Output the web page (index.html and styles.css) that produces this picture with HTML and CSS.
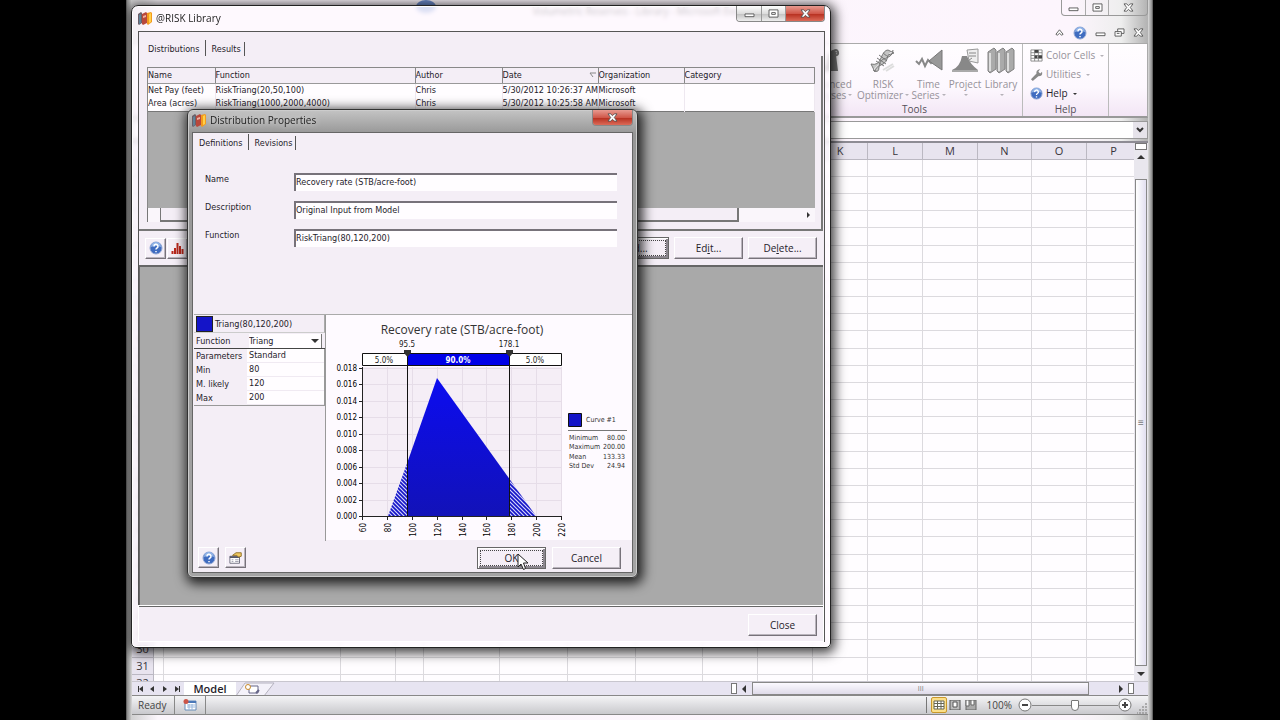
FILE: index.html
```html
<!DOCTYPE html>
<html lang="en">
<head>
<meta charset="utf-8">
<title>@RISK Library</title>
<link rel="stylesheet" href="styles.css">
</head>
<body>
<svg class="defs" aria-hidden="true">
  <defs>
    <symbol id="books" viewBox="0 0 14 14">
      <path d="M0 3l3-2 1 1v10l-3 2-1-1z" fill="#6b5f68"/><path d="M1 4l2-1v9l-2 1z" fill="#5f8298"/>
      <path d="M4 3l4-2 1 1v10l-4 2-1-1z" fill="#b8483c"/><path d="M5 5l3-1v2l-3 1z" fill="#f0b0a0"/>
      <path d="M9 2l4-1 1 1v9l-4 3-1-1z" fill="#f39a1c"/><path d="M11 3l2-1v9l-2 1z" fill="#ffd04a"/>
    </symbol>
    <symbol id="help" viewBox="0 0 14 14">
      <circle cx="7" cy="7" r="6" fill="#3f6cc0" stroke="#8fa6d4"/><path d="M2 6a5 5 0 0 1 10 0q-5-2-10 0z" fill="#8fb2e6"/>
      <path d="M5 5.500a2 2 0 1 1 3 1.500q-1 .5-1 1.500M7 10v1.200" fill="none" stroke="#fff" stroke-width="1.500"/>
    </symbol>
    <symbol id="cross" viewBox="0 0 12 10"><path d="M1 1h3l2 2 2-2h3L8 5l3 4H8L6 7 4 9H1l3-4z" fill="#fff" stroke="#555"/></symbol>
    <symbol id="maxi" viewBox="0 0 12 10"><path d="M1 1h10v8H1z" fill="#fff" stroke="#555"/><path d="M4 4h4v2H4z" fill="none" stroke="#555"/></symbol>
    <symbol id="mini" viewBox="0 0 12 10"><path d="M1 5.500h10v3H1z" fill="#fff" stroke="#555"/></symbol>
  </defs>
</svg>

<main class="desktop">
  <section class="excel">
    <header class="excel-title">
      <span class="excel-name">Volumetric Reserves - Library - Microsoft Excel</span>
      <span class="glass-orb"></span>
      <div class="excel-caption">
        <button aria-label="Minimize Excel"><svg><use href="#mini"/></svg></button>
        <button aria-label="Restore Excel"><svg><use href="#maxi"/></svg></button>
        <button aria-label="Close Excel"><svg><use href="#cross"/></svg></button>
      </div>
    </header>
    <div class="tab-row">
      <svg class="mini-icon" viewBox="0 0 12 10"><path d="M2 7l4-5 4 5-1.500 1L6 6 3.500 8z" fill="#fff" stroke="#555"/></svg>
      <svg class="help-icon"><use href="#help"/></svg>
      <svg class="mini-icon"><use href="#mini"/></svg>
      <svg class="mini-icon" viewBox="0 0 12 10"><path d="M4 1h7v5H4z" fill="#fff" stroke="#555"/><path d="M1 4h7v5H1z" fill="#fff" stroke="#555"/><path d="M3 6h3" stroke="#555"/></svg>
      <svg class="mini-icon"><use href="#cross"/></svg>
    </div>
    <div class="ribbon">
      <div class="group tools">
        <div class="group-body">
          <button class="big"><svg viewBox="0 0 28 28"><path d="M6 24q6-2 7-16l4-5 5 2-1 3 2 16z" fill="#777"/><path d="M17 5q5-4 6 0t-4 3" fill="none" stroke="#777" stroke-width="2"/></svg><span>Advanced</span><span>Analyses<i></i></span></button>
          <button class="big"><svg viewBox="0 0 28 28"><path d="M14 23l10-6M17 24l8-5" stroke="#ddd" stroke-width="2"/><path d="M4 23q6 4 6-3t7-9 7-8M2 17q7 2 10-6t7-8l6 3-6 2q-1 8-7 10t-6 7z" fill="#c4c4c4" stroke="#777" stroke-width="1"/><path d="M8 11l9 6M7 14l8 5M10 8l8 6M14 6l5 4" stroke="#777"/></svg><span>RISK</span><span>Optimizer<i></i></span></button>
          <button class="big"><svg viewBox="0 0 28 28"><path d="M1 14l3 3 3-5 3 7 3-6 3 3 2-2" fill="none" stroke="#888" stroke-width="2"/><path d="M14 14L27 3v20z" fill="#999" stroke="#777"/></svg><span>Time</span><span>Series<i></i></span></button>
          <button class="big"><svg viewBox="0 0 28 28"><path d="M1 23q8-3 10-14h5q3 8 11 14z" fill="#888"/><path d="M1 24h26" stroke="#aaa" stroke-width="2"/><path d="M16 3l11-1v14l-9-2z" fill="#eee" stroke="#999"/><path d="M18 6h7M18 9h7M14 16l7-5" stroke="#888"/></svg><span>Project</span><span><i></i></span></button>
          <button class="big"><svg viewBox="0 0 28 28"><g fill="#aaa" stroke="#808080"><path d="M1 5l6-4 2 2v19l-6 4-2-2z"/><path d="M10 5l6-4 2 2v19l-6 4-2-2z"/><path d="M19 5l6-4 2 2v19l-6 4-2-2z"/></g><path d="M3 6v18M12 6v18M21 6v18" stroke="#ddd" stroke-width="2"/></svg><span>Library</span><span><i></i></span></button>
        </div>
        <div class="group-name">Tools</div>
      </div>
      <div class="group help-group">
        <div class="group-list">
          <button class="small dim"><svg viewBox="0 0 14 14"><path d="M1 1h12v12H1z" fill="#fff" stroke="#888"/><path d="M1 4h12M1 7h12M1 10h12M5 1v12M9 1v12" stroke="#888"/><path d="M5 1h4v3H5zM9 7h4v3H9zM5 7h3v3H5z" fill="#444"/></svg>Color Cells <i></i></button>
          <button class="small dim"><svg viewBox="0 0 14 14"><path d="M1 12l6-6q-1-4 4-5L9 4l2 2 2-2q1 5-4 5l-6 5z" fill="#888"/></svg>Utilities <i></i></button>
          <button class="small"><svg><use href="#help"/></svg>Help <i></i></button>
        </div>
        <div class="group-name">Help</div>
      </div>
      <div class="ribbon-rest"></div>
    </div>
    <div class="formula-bar"><input aria-label="Formula bar"><button aria-label="Expand formula bar"><svg viewBox="0 0 8 8"><path d="M1 2l3 3 3-3" fill="none" stroke="#333" stroke-width="2"/></svg></button></div>
    <div class="sheet-area">
      <div class="grid-clip">
        <table class="sheet" id="sheet"></table>
      </div>
      <div class="vscroll">
        <div class="split"></div>
        <i class="arrow up"></i>
        <div class="vthumb"><span>≡</span></div>
        <i class="arrow down"></i>
      </div>
    </div>
    <div class="sheet-tabs">
      <svg class="nav" viewBox="0 0 52 14"><path d="M6.500 4v6M47.500 4v6" stroke="#333"/><path d="M11 4v6L7 7zM22 4v6l-4-3zM31 4v6l4-3zM43 4v6l4-3z" fill="#333"/></svg>
      <button class="sheet-tab">Model</button>
      <svg class="new-tab" viewBox="0 0 42 14"><path d="M0 14L9 1h29l-10 13z" fill="#f4f2fa" stroke="#b4b2be"/><path d="M13 4h9v7h-9z" fill="#fff" stroke="#668"/><path d="M20 11l3-3" stroke="#668" stroke-width="2"/><circle cx="12" cy="5" r="2.500" fill="#fff" stroke="#c98b2a"/></svg>
      <div class="hscroll">
        <span class="grip"></span><i class="arrow left"></i>
        <div class="hthumb"><span>III</span></div>
        <i class="arrow right"></i><span class="grip"></span>
      </div>
    </div>
    <footer class="status">
      <span class="ready">Ready</span>
      <svg class="macro" viewBox="0 0 14 12"><path d="M2 2h11v9H2z" fill="#fff" stroke="#668bb8"/><path d="M2 3h11" stroke="#4a78b8" stroke-width="2"/><path d="M4 6h8M4 8h8M6 5v6M9 5v6" stroke="#9bb8dc"/><circle cx="3" cy="2.500" r="2.500" fill="#cc5548"/></svg>
      <span class="rule"></span>
      <div class="views">
        <button class="on" aria-label="Normal"><svg viewBox="0 0 12 10"><path d="M1 1h10v8H1zM1 3.500h10M1 6.500h10M4.500 1v8M8 1v8" fill="#fff" stroke="#665"/></svg></button>
        <button aria-label="Page layout"><svg viewBox="0 0 12 10"><path d="M1 0h10v10H1z" fill="#bbb" stroke="#555"/><path d="M4 2h4v5H4z" fill="#fff" stroke="#555"/></svg></button>
        <button aria-label="Page break"><svg viewBox="0 0 12 10"><path d="M1 0h10v10H1z" fill="#aaa" stroke="#666"/><path d="M1 0h3v6H1zM6 0h3v5H6z" fill="#fff" stroke="#666"/></svg></button>
      </div>
      <span class="percent">100%</span>
      <svg class="round" viewBox="0 0 14 14"><circle cx="7" cy="7" r="6" fill="#fff" stroke="#777"/><path d="M4 7h6" stroke="#444" stroke-width="2"/></svg>
      <input class="zoom" type="range" aria-label="Zoom" value="50">
      <svg class="round" viewBox="0 0 14 14"><circle cx="7" cy="7" r="6" fill="#fff" stroke="#777"/><path d="M4 7h6M7 4v6" stroke="#444" stroke-width="2"/></svg>
      <svg class="resize" viewBox="0 0 12 12"><path d="M9 2h2M6 5h2M9 5h2M3 8h2M6 8h2M9 8h2M1 11h1M3 11h2M6 11h2M9 11h2" stroke="#999" stroke-width="1.500"/></svg>
    </footer>
  </section>

  <section class="library">
    <header class="win-title">
      <svg class="books"><use href="#books"/></svg><h1>@RISK Library</h1>
      <div class="caption">
        <button aria-label="Minimize"><svg><use href="#mini"/></svg></button>
        <button aria-label="Maximize"><svg><use href="#maxi"/></svg></button>
        <button class="red" aria-label="Close window"><svg><use href="#cross"/></svg></button>
      </div>
    </header>
    <div class="lib-client">
      <div class="tabs"><button class="tab current">Distributions</button><button class="tab">Results</button></div>
      <div class="tab-page">
        <div class="list">
          <table class="items">
            <colgroup><col class="c-name"><col class="c-func"><col class="c-auth"><col class="c-date"><col class="c-org"><col></colgroup>
            <thead><tr><th>Name</th><th>Function</th><th>Author</th><th><span class="sort">Date<svg viewBox="0 0 8 6"><path d="M1 1h6M1 1l3 4" fill="none" stroke="#888"/></svg></span></th><th>Organization</th><th>Category</th></tr></thead>
            <tbody>
              <tr><td>Net Pay (feet)</td><td>RiskTriang(20,50,100)</td><td>Chris</td><td>5/30/2012 10:26:37 AM</td><td>Microsoft</td><td></td></tr>
              <tr><td>Area (acres)</td><td>RiskTriang(1000,2000,4000)</td><td>Chris</td><td>5/30/2012 10:25:58 AM</td><td>Microsoft</td><td></td></tr>
            </tbody>
          </table>
        </div>
        <div class="list-scroll"><span class="ls-left"></span><span class="ls-thumb"></span><i class="arrow right"></i></div>
      </div>
      <div class="actions">
        <button class="btn square" aria-label="Help"><svg><use href="#help"/></svg></button>
        <button class="btn square" aria-label="Graph"><svg viewBox="0 0 14 14"><path d="M1.500 13v-3M4 13V7M6.500 13V2M9 13V5M11.500 13V8" stroke="#b8281c" stroke-width="2"/></svg></button>
        <span class="gap"></span>
        <button class="btn default"><span>Add...</span></button>
        <button class="btn">Ed<u>i</u>t...</button>
        <button class="btn">De<u>l</u>ete...</button>
      </div>
      <div class="preview"></div>
      <div class="lib-foot"><button class="btn">Close</button></div>
    </div>
  </section>

  <section class="dialog">
    <header class="win-title">
      <svg class="books"><use href="#books"/></svg><h2>Distribution Properties</h2>
      <div class="caption"><button class="red" aria-label="Close dialog"><svg><use href="#cross"/></svg></button></div>
    </header>
    <div class="dlg-client">
      <div class="tabs"><button class="tab current">Definitions</button><button class="tab">Revisions</button></div>
      <form class="fields">
        <label for="f-name">Name</label><input id="f-name" value="Recovery rate (STB/acre-foot)">
        <label for="f-desc">Description</label><input id="f-desc" value="Original Input from Model">
        <label for="f-func">Function</label><input id="f-func" value="RiskTriang(80,120,200)">
      </form>
      <div class="definition">
        <div class="side">
          <div class="side-head"><span class="swatch"></span>Triang(80,120,200)</div>
          <div class="side-func"><label for="f-kind">Function</label><span class="select"><select id="f-kind"><option>Triang</option></select><i class="arrow down"></i></span></div>
          <table class="params">
            <tr><th>Parameters</th><td>Standard</td></tr>
            <tr><th>Min</th><td>80</td></tr>
            <tr><th>M. likely</th><td>120</td></tr>
            <tr><th>Max</th><td>200</td></tr>
          </table>
        </div>
        <svg class="chart" viewBox="327 315 304 225">
          <defs><pattern id="hatch" width="4" height="4" patternUnits="userSpaceOnUse"><path d="M0 0h4v4H0z" fill="#1414c8"/><path d="M-1-1l6 6M-1 3l2 2M3-1l2 2" stroke="#d4d4fa" stroke-width="1.200"/></pattern>
          <linearGradient id="blue" x2="0" y2="1"><stop stop-color="#0c0cf0"/><stop offset="1" stop-color="#1212b8"/></linearGradient></defs>
          <text class="c-title" x="462" y="334">Recovery rate (STB/acre-foot)</text>
          <path d="M363 367h199v149H363z" fill="#f5eef6"/>
          <g id="grid"></g>
          <path d="M388 516L407.500 462V516z" fill="url(#hatch)"/><path d="M509.500 479L536 516H509.500z" fill="url(#hatch)"/>
          <path d="M407.500 462L437 378l72.500 101v37h-102z" fill="url(#blue)"/>
          <path d="M362.500 353.500h199v12h-199z" fill="#fff" stroke="#111"/><path d="M408 354h101v11H408z" fill="#0000e8"/>
          <path d="M407.500 353v163M509.500 353v163" stroke="#111"/>
          <path d="M404 350h7v3l-3.500 4-3.500-4zM506 350h7v3l-3.500 4-3.500-4z" fill="#333"/>
          <path d="M362.500 367v149.500h199" fill="none" stroke="#222"/>
          <g class="c-mid"><text x="407" y="347">95.5</text><text x="509" y="347">178.1</text><text x="384" y="363">5.0%</text><text class="white" x="458" y="363">90.0%</text><text x="535" y="363">5.0%</text></g>
          <g id="ticks"></g>
          <path d="M568.500 413.500h13v13h-13z" fill="#1414c8" stroke="#111"/>
          <text class="c-leg" x="586" y="422">Curve #1</text>
          <path d="M568 430.500h59" stroke="#777"/>
          <g class="c-leg"><text x="569" y="440">Minimum</text><text x="569" y="449">Maximum</text><text x="569" y="459">Mean</text><text x="569" y="468">Std Dev</text></g>
          <g class="c-leg end"><text x="625" y="440">80.00</text><text x="625" y="449">200.00</text><text x="625" y="459">133.33</text><text x="625" y="468">24.94</text></g>
        </svg>
      </div>
      <div class="dlg-foot">
        <button class="btn square" aria-label="Dialog help"><svg><use href="#help"/></svg></button>
        <button class="btn square" aria-label="Properties"><svg viewBox="0 0 16 14"><path d="M1 5h11v8H1z" fill="#fff" stroke="#667"/><path d="M1 6h11" stroke="#556" stroke-width="2"/><path d="M3 9h2M3 11h2M7 9h4M7 11h4" stroke="#99a"/><path d="M4 4l4-3h6v4l-3 1-2-2z" fill="#f0c860" stroke="#8a6a20"/></svg></button>
        <span class="gap"></span>
        <button class="btn default"><span>OK</span></button>
        <button class="btn">Cancel</button>
      </div>
    </div>
  </section>
  <svg class="pointer" viewBox="0 0 12 18"><path d="M1 1v13l3-3 2.500 5.500 2-1L6.500 10H11z" fill="#fff" stroke="#222"/></svg>
</main>
<script src="app.js"></script>
</body>
</html>
```

FILE: styles.css
```css
* { box-sizing: border-box; }
body { margin: 0; background: #000; overflow: hidden; font: 9px/14px "DejaVu Sans Condensed", "DejaVu Sans", sans-serif; color: #26222a; }
button, input, select { font: inherit; color: inherit; margin: 0; padding: 0; border: 0; background: none; border-radius: 0; }
h1, h2 { margin: 0; font-weight: 400; }
svg { display: block; flex: none; }
table { border-collapse: collapse; }
.defs { position: absolute; width: 0; height: 0; }
.desktop { position: relative; height: 100vh; overflow: hidden; }

.arrow { width: 0; height: 0; border: 4px solid transparent; flex: none; }
.arrow.up { border-top: 0; border-bottom-color: #333; }
.arrow.down { border-bottom: 0; border-top-color: #333; }
.arrow.left { border-left: 0; border-right-color: #333; }
.arrow.right { border-right: 0; border-left-color: #333; }
.gap { flex: 1; }

/* spreadsheet window */
.excel { position: absolute; inset: 0 127px 0 126px; display: flex; flex-direction: column; padding: 0 4px 5px 5px; border: solid #666; border-width: 0 1px; background: linear-gradient(90deg, #c9c9c9, #fbf6fc 3%, #fdf5fd 92%, #eee 97%, #a9a9a9); font: 10px/11px "Open Sans", sans-serif; }
.excel::before, .excel::after { content: ""; position: absolute; top: 0; bottom: 0; width: 4px; background: linear-gradient(90deg, #8a8a8a, #c6c6c6); }
.excel::before { left: 0; }
.excel::after { right: 0; background: linear-gradient(90deg, #ddd, #8a8a8a); }
.excel-title { display: flex; height: 20px; justify-content: center; position: relative; }
.excel-name { padding-top: 6px; color: #222; }
.glass-orb { position: absolute; left: 284px; top: 0; width: 20px; height: 13px; border-radius: 50%; background: #6f8fd0; }
.excel-caption { position: absolute; right: 0; top: 0; display: flex; border: 1px solid #999; border-top: 0; border-radius: 0 0 4px 4px; height: 16px; }
.excel-caption button { width: 23px; display: grid; place-items: center; }
.excel-caption button + button { border-left: 1px solid #aaa; }
.excel-caption button:last-child { width: 39px; }
.excel-caption svg, .mini-icon { width: 11px; height: 9px; }
.tab-row { height: 23px; display: flex; align-items: center; justify-content: flex-end; gap: 8px; padding: 2px 4px 0 0; }
.help-icon { width: 14px; height: 14px; }
.ribbon { display: flex; justify-content: flex-end; height: 75px; border: 1px solid #aaa; border-bottom: 2px solid #999; background: linear-gradient(#fffdff, #fdf8fe 60%, #f3e6f5); }
.group { display: flex; flex-direction: column; justify-content: space-between; border-right: 1px solid #bbb; }
.group-name { text-align: center; color: #55505a; padding-bottom: 1px; line-height: 12px; }
.tools { width: 216px; }
.group-body { display: flex; justify-content: flex-end; padding: 3px 3px 0 0; }
.big { display: flex; flex-direction: column; align-items: center; color: #96929a; width: 36px; flex: none; }
.big:nth-child(1) { width: 54px; }
.big:nth-child(2) { width: 54px; }
.big:nth-child(3) { width: 37px; }
.big svg { width: 28px; height: 28px; margin-bottom: 4px; }
.big span { white-space: nowrap; min-height: 11px; }
.ribbon i { display: inline-block; border: 2px solid transparent; border-top-color: #b5b1b8; border-bottom: 0; margin: 0 0 3px 2px; }
.help-group { width: 86px; }
.group-list { display: flex; flex-direction: column; padding-top: 2px; }
.small { display: flex; align-items: center; gap: 3px; height: 19px; padding-left: 7px; white-space: nowrap; }
.small i { margin: 0 0 0 2px; }
.small:last-child i { border-top-color: #333; }
.small svg { width: 13px; height: 13px; }
.small.dim { color: #96929a; }
.ribbon-rest { width: 38px; }
.formula-bar { display: flex; height: 18px; margin: 3px 0 2px; border: 1px solid #999; background: #fff; flex: none; }
.formula-bar input { flex: 1; min-width: 0; }
.formula-bar button { width: 14px; display: grid; place-items: center; background: #e6e3ea; }
.formula-bar svg { width: 8px; height: 8px; }
.sheet-area { flex: 1; min-height: 0; display: flex; border-top: 2px solid #8e8c94; }
.grid-clip { flex: 1; min-width: 0; overflow: hidden; background: #fff; }
.sheet { table-layout: fixed; width: 1009px; border-collapse: separate; border-spacing: 0; font-size: 11px; line-height: 12px; }
.sheet th { background: #e8e4ef; font-weight: 400; padding: 0; color: #38343c; border-right: 1px solid #bbb8c2; border-bottom: 1px solid #bbb8c2; height: 17px; overflow: hidden; }
.sheet td { padding: 0; border-right: 1px solid #dcdade; border-bottom: 1px solid #dcdade; background: #fffdff; }
.sheet tr:nth-child(6n) th { height: 18px; }
.vscroll { width: 14px; background: #e9e7ee; display: flex; flex-direction: column; align-items: center; padding-bottom: 5px; }
.split { width: 12px; height: 7px; border: 1px solid #777; background: #fff; margin-bottom: 5px; flex: none; }
.vthumb { flex: 1; width: 12px; border: 1px solid #888; margin: 20px 0 6px; background: linear-gradient(90deg, #fff, #e2dff0); display: grid; place-items: center; color: #777; }
.sheet-tabs { display: flex; height: 14px; background: #e7e4f1; align-items: center; flex: none; border-top: 1px solid #c8c6ce; }
.nav { width: 52px; height: 14px; }
.sheet-tab { background: #fff; width: 52px; height: 14px; font-weight: 600; font-size: 11px; line-height: 13px; }
.new-tab { width: 42px; height: 14px; }
.hscroll { margin-left: auto; width: 41%; display: flex; align-items: center; height: 14px; padding-right: 14px; }
.grip { width: 6px; height: 11px; border: 1px solid #777; background: #fff; flex: none; }
.hscroll .left { margin: 0 6px 0 5px; }
.hthumb { flex: 1; height: 13px; border: 1px solid #888; background: linear-gradient(#fbf9ff, #dfdbe9); text-align: center; font-size: 7px; line-height: 11px; color: #777; }
.hscroll .arrow.right { margin: 0 5px 0 30px; }
.status { height: 20px; border: 1px solid #888; border-width: 1px 0; background: linear-gradient(#f4f4f6, #c9c9cd); display: flex; align-items: center; flex: none; color: #444; }
.ready { padding: 0 8px 0 6px; border-right: 1px solid #888; line-height: 18px; }
.macro { width: 14px; height: 12px; margin: 0 8px; }
.rule { width: 1px; height: 18px; background: #888; }
.views { margin-left: auto; display: flex; border-left: 1px solid #777; padding-left: 4px; }
.views button { width: 16px; height: 16px; display: grid; place-items: center; border: 1px solid transparent; }
.views .on { border-color: #c9982c; background: #fbdf8a; border-radius: 2px; }
.views svg { width: 12px; height: 10px; }
.percent { padding: 0 6px 0 8px; }
.round { width: 14px; height: 14px; }
.zoom { appearance: none; width: 86px; height: 12px; background: linear-gradient(#888, #888) center / 100% 1px no-repeat; }
.zoom::-webkit-slider-thumb { appearance: none; width: 8px; height: 11px; background: #fff; border: 1px solid #777; border-radius: 1px 1px 4px 4px; }
.resize { width: 12px; height: 12px; margin-left: 4px; align-self: flex-end; }

/* shared dialog chrome */
.win-title { display: flex; align-items: center; padding-bottom: 2px; font: 11px/14px "Open Sans", sans-serif; color: #222; flex: none; }
.win-title h1, .win-title h2 { font-size: 10px; }
.books { width: 14px; height: 14px; margin-right: 4px; }
.caption { margin-left: auto; align-self: flex-start; display: flex; height: 16px; border: 1px solid #888; border-top: 0; border-radius: 0 0 4px 4px; overflow: hidden; }
.caption button { width: 24px; display: grid; place-items: center; background: linear-gradient(#fff, #ddd 50%, #c4c4c4 55%, #eee); }
.caption button + button { border-left: 1px solid #999; }
.caption .red { width: 39px; background: linear-gradient(#e89a90, #d0584a 50%, #b83222 55%, #dc6a58); }
.caption svg { width: 11px; height: 9px; }
.tabs { display: flex; align-items: flex-start; }
.tab { border-right: 1px solid #555; padding: 1px 6px 0 5px; height: 16px; }
.tab:not(.current) { padding: 0 3px 0 5px; height: 14px; margin-top: 2px; }
.btn { width: 69px; height: 22px; background: #f5eff7; border: 1px solid; border-color: #fff #77727a #77727a #fff; box-shadow: inset -1px -1px #b9b4bc; flex: none; font: 10px/14px "Open Sans", sans-serif; text-align: center; }
.btn.square { width: 21px; height: 21px; display: grid; place-items: center; }
.btn.square svg { width: 14px; height: 14px; }
.btn.default { border-color: #666; box-shadow: inset 1px 1px #fff, inset -2px -2px #8c878f; padding: 2px; }
.btn.default span { display: block; border: 1px dotted #444; height: 16px; }

/* library window */
.library { position: absolute; left: 131px; top: 5px; width: 700px; height: 643px; display: flex; flex-direction: column; padding: 0 5px 5px 6px; border: 1px solid #222; border-radius: 7px 7px 5px 5px; background: rgba(255, 250, 255, .75); backdrop-filter: blur(2px); box-shadow: 1px 2px 12px 3px rgba(0, 0, 0, .75), inset 0 0 0 1px #fff; }
.library > .win-title { height: 25px; }
.lib-client { flex: 1; min-height: 0; display: flex; flex-direction: column; border: 1px solid #555; background: #f4eef6; padding-right: 1px; }
.library .tabs { padding: 8px 0 0 4px; }
.tab-page { border: solid #777; border-width: 0 2px 2px 0; padding: 11px 6px 7px 8px; display: flex; flex-direction: column; height: 175px; flex: none; }
.list { flex: 1; background: #ababab; border: 1px solid #888; border-width: 1px 0 0 1px; }
.items { width: 100%; table-layout: fixed; background: #fffdff; border-bottom: 1px solid #777; }
.c-name { width: 67px; } .c-func { width: 200px; } .c-auth { width: 87px; } .c-date { width: 96px; } .c-org { width: 86px; }
.items th, .items td { text-align: left; font-weight: 400; padding: 0 1px 0 0; overflow: hidden; white-space: nowrap; height: 14px; line-height: 13px; border-right: 1px solid #eee8f0; }
.items th { background: #f4eef6; border-right: 1px solid #888; border-bottom: 1px solid #999; height: 15px; }
.sort { display: flex; align-items: center; justify-content: space-between; }
.sort svg { width: 8px; height: 6px; }
.list-scroll { height: 14px; display: flex; align-items: center; background: #faf6fb; flex: none; }
.ls-left { width: 14px; height: 14px; border-right: 1px solid #777; border-left: 1px solid #777; }
.ls-thumb { width: 578px; height: 14px; border: solid #777; border-width: 0 2px 2px 0; background: #f4eef6; }
.list-scroll .arrow { margin: 0 5px 0 auto; border-width: 3px 0 3px 3px; }
.actions { display: flex; align-items: center; height: 34px; padding: 0 6px; gap: 5px; flex: none; }
.actions .square + .square { margin-left: -4px; }
.preview { flex: 1; background: #a9a9a9; border: solid #666; border-width: 2px 0 0 1px; }
.lib-foot { height: 35px; flex: none; border-top: 1px solid #666; outline: 1px solid #fff; display: flex; justify-content: flex-end; align-items: center; padding: 2px 6px 0 0; }

/* properties dialog */
.dialog { position: absolute; left: 187px; top: 109px; width: 451px; height: 469px; display: flex; flex-direction: column; padding: 0 4px 4px; border: 1px solid #333; border-radius: 6px; background: linear-gradient(#c4c4c4, #969696 24px, #a4a4a4); box-shadow: 2px 3px 12px 3px rgba(0, 0, 0, .8), inset 0 0 0 1px #ccc; }
.dialog > .win-title { height: 22px; }
.dialog h2 { text-shadow: 0 0 6px #eee; }
.dlg-client { flex: 1; min-height: 0; display: flex; flex-direction: column; border: 1px solid #666; background: #f4eef6; }
.dlg-client > .tabs { height: 19px; padding: 1px 0 0 1px; }
.fields { display: grid; grid-template-columns: 89px 1fr; row-gap: 10px; padding: 21px 15px 0 12px; height: 162px; align-content: start; align-items: center; }
.fields input { background: #fffdff; height: 18px; border: solid #77727a; border-width: 2px 0 0 2px; min-width: 0; padding-bottom: 2px; }
.fields label { height: 18px; line-height: 13px; }
.definition { flex: 1; min-height: 0; display: flex; border-top: 1px solid #aaa; margin-left: 1px; }
.side { width: 132px; border-right: 1px solid #999; font-size: 9px; }
.side-head { display: flex; align-items: center; gap: 2px; height: 18px; padding-left: 2px; border-right: 1px solid #aaa; border-bottom: 1px solid #ccc; }
.swatch { width: 17px; height: 16px; background: #1414c8; border: 1px solid #222; }
.side-func { display: flex; align-items: center; height: 16px; padding: 0 3px 0 2px; border-bottom: 1px solid #444; }
.side-func label { width: 53px; }
.select { flex: 1; background: #fffdff; height: 14px; display: flex; align-items: center; border-right: 1px solid #777; padding-right: 2px; }
select { appearance: none; flex: 1; min-width: 0; height: 14px; outline: 0; }
.params { width: 131px; border-bottom: 1px solid #999; border-right: 1px solid #999; border-collapse: separate; border-spacing: 0; }
.params th { text-align: left; font-weight: 400; width: 53px; padding: 0 0 0 2px; }
.params td { background: #fffdff; padding: 0 0 0 2px; border-bottom: 1px solid #f0eaf2; }
.params th, .params td { line-height: 13px; height: 14px; }
.chart { flex: 1; min-width: 0; height: 225px; background: #fefaff; font-family: "DejaVu Sans Condensed", "DejaVu Sans", sans-serif; }
.c-title { font: 12px "Open Sans", sans-serif; text-anchor: middle; fill: #333; }
.c-mid { font-size: 8px; text-anchor: middle; fill: #222; }
.white { fill: #fff; font-weight: 700; }
.c-leg { font-size: 7px; fill: #333; }
.end { text-anchor: end; }
.dlg-foot { display: flex; align-items: center; height: 31px; flex: none; padding: 2px 11px 0 5px; gap: 6px; }
.pointer { position: absolute; left: 517px; top: 553px; width: 12px; height: 18px; }
```

FILE: app.js
```js
const widths = [22, 10, 177, 55, 28, 76, 68, 68, 67, 55, 55, 55, 55, 55, 54, 55, 54];
const sheet = document.getElementById('sheet');
let html = '<colgroup>' + widths.map(w => `<col style="width:${w}px">`).join('') + '</colgroup><tr>';
html += widths.map((w, i) => `<th>${i < 1 ? '' : String.fromCharCode(64 + i)}</th>`).join('') + '</tr>';
for (let r = 2; r <= 32; r++) {
  html += `<tr><th>${r}</th>` + '<td></td>'.repeat(widths.length - 1) + '</tr>';
}
sheet.innerHTML = html;

let grid = '';
let ticks = '';
for (let i = 0; i <= 8; i++) {
  const x = Math.round(362 + i * 24.875) + 0.5;
  grid += `<path d="M${x} 367v149" stroke="#e6dde8"/>`;
  ticks += `<path d="M${x} 516v4" stroke="#222"/><text class="end" font-size="8" transform="translate(${x + 3} 523) rotate(-90)">${60 + i * 20}</text>`;
}
for (let i = 0; i <= 9; i++) {
  const y = Math.round(516 - i * 16.5) + 0.5;
  grid += `<path d="M363 ${y}h199" stroke="#e6dde8"/>`;
  ticks += `<path d="M359 ${y}h4" stroke="#222"/><text class="end" font-size="8" x="357" y="${y + 2}">${(i * 0.002).toFixed(3)}</text>`;
}
document.getElementById('grid').innerHTML = grid;
document.getElementById('ticks').innerHTML = ticks;
```
